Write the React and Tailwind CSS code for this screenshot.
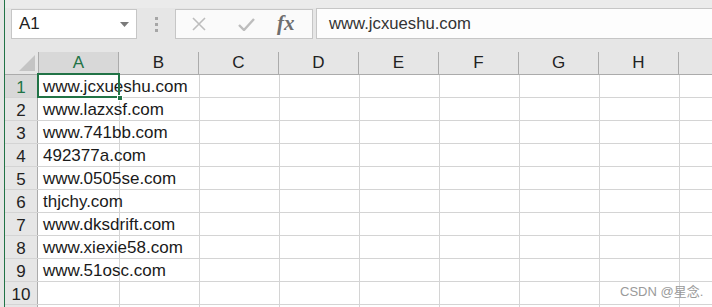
const cols = ["A", "B", "C", "D", "E", "F", "G", "H"]

const data = [
  "www.jcxueshu.com",
  "www.lazxsf.com",
  "www.741bb.com",
  "492377a.com",
  "www.0505se.com",
  "thjchy.com",
  "www.dksdrift.com",
  "www.xiexie58.com",
  "www.51osc.com",
  "",
  "",
]

const App = () => {
  return (
    <div
      className="relative w-[712px] h-[307px] overflow-hidden bg-white flex"
      style={{ fontFamily: '"Liberation Sans", Arial, sans-serif' }}
    >
      {/* window edge */}
      <div className="w-[4px] shrink-0 bg-[#e6e6e6]" />
      <div className="w-px shrink-0 bg-[#217346]" />

      <div className="flex-1 flex flex-col min-w-0">
        {/* Toolbar: name box + formula bar */}
        <div className="h-[52px] shrink-0 bg-[#e6e6e6] border-t-[8px] border-[#ebebeb] flex items-start pt-px">
          <div className="ml-[6px] w-[126px] h-[30px] bg-white border border-[#c6c6c6] flex items-center justify-between pl-[7px] pr-[7px]">
            <span className="text-[17px] text-[#222]">A1</span>
            <svg width="9" height="5" viewBox="0 0 9 5">
              <path d="M0 0h9L4.5 5z" fill="#7a7a7a" />
            </svg>
          </div>
          <div className="w-[38px] h-[30px] flex flex-col items-center justify-center gap-[3px]">
            <div className="w-[3px] h-[3px] bg-[#a6a6a6]" />
            <div className="w-[3px] h-[3px] bg-[#a6a6a6]" />
            <div className="w-[3px] h-[3px] bg-[#a6a6a6]" />
          </div>
          <div className="w-[138px] h-[30px] bg-[#fafafa] border border-[#c6c6c6] flex items-center">
            <svg className="ml-[16px]" width="14" height="14" viewBox="0 0 14 14">
              <path d="M1 1l12 12M13 1L1 13" stroke="#bdbdbd" strokeWidth="1.6" fill="none" />
            </svg>
            <svg className="ml-[32px]" width="17" height="13" viewBox="0 0 17 13">
              <path d="M1 7l5 5L16 1" stroke="#bdbdbd" strokeWidth="2.4" fill="none" />
            </svg>
            <span
              className="ml-[22px] text-[21px] italic font-bold text-[#6e6e6e] leading-none -mt-[2px]"
              style={{ fontFamily: '"Liberation Serif", "Times New Roman", serif' }}
            >
              fx
            </span>
          </div>
          <div className="ml-[3px] flex-1 h-[31px] -mt-px bg-[#fdfdfd] border-t border-b border-l border-[#c6c6c6] flex items-center pl-[12px]">
            <span className="text-[16.7px] text-[#333]">www.jcxueshu.com</span>
          </div>
        </div>

        {/* Column headers */}
        <div className="h-[23px] shrink-0 flex bg-[#e6e6e6] border-b border-[#ababab]">
          <div className="w-[33px] shrink-0 relative">
            <svg className="absolute right-[3px] bottom-[3px]" width="16" height="16" viewBox="0 0 16 16">
              <path d="M16 0v16H0z" fill="#c4c4c4" />
            </svg>
          </div>
          {cols.map(c => (
            <div
              key={c}
              className={`w-[80px] shrink-0 flex items-end justify-center text-[17px] leading-[22px] border-l border-[#ababab] ${
                c === "A" ? "bg-[#d8d8d8] text-[#217346]" : "text-[#222]"
              }`}
            >
              {c}
            </div>
          ))}
          <div className="flex-1 border-l border-[#ababab]" />
        </div>

        {/* Rows (11th is only a sliver at the bottom edge) */}
        {data.map((val, i) => (
          <div key={i} className="h-[23px] shrink-0 flex border-b border-[#d4d4d4]">
            <div
              className={`w-[33px] shrink-0 flex items-center justify-center pt-[2px] text-[17px] leading-none border-r border-[#ababab] ${
                i === 0 ? "bg-[#d8d8d8] text-[#217346]" : "bg-[#e6e6e6] text-[#222]"
              }`}
            >
              {i < 10 ? i + 1 : ""}
            </div>
            {cols.map((c, j) => (
              <div
                key={c}
                className={`w-[80px] shrink-0 relative ${j === 0 ? "ml-px" : "border-l border-[#d4d4d4]"}`}
              >
                {j === 0 && val && (
                  <span className="absolute left-[4px] top-[2px] leading-[20px] text-[17px] text-[#1a1a1a] whitespace-nowrap z-10">
                    {val}
                  </span>
                )}
              </div>
            ))}
            <div className="flex-1 border-l border-[#d4d4d4]" />
          </div>
        ))}
      </div>

      {/* Active cell selection */}
      <div className="absolute left-[37px] top-[73px] w-[83px] h-[25px] border-2 border-[#217346] z-20">
        <div className="absolute right-[-5px] bottom-[-5px] w-[6px] h-[6px] bg-[#217346] border border-white" />
      </div>

      {/* Watermark */}
      <div
        className="absolute left-[620px] top-[282px] text-[13px] text-[#9a9a9a] z-30 whitespace-nowrap"
        style={{ fontFamily: '"Liberation Sans", "Noto Sans CJK SC", sans-serif' }}
      >
        CSDN @星念.
      </div>
    </div>
  )
}

export default App
